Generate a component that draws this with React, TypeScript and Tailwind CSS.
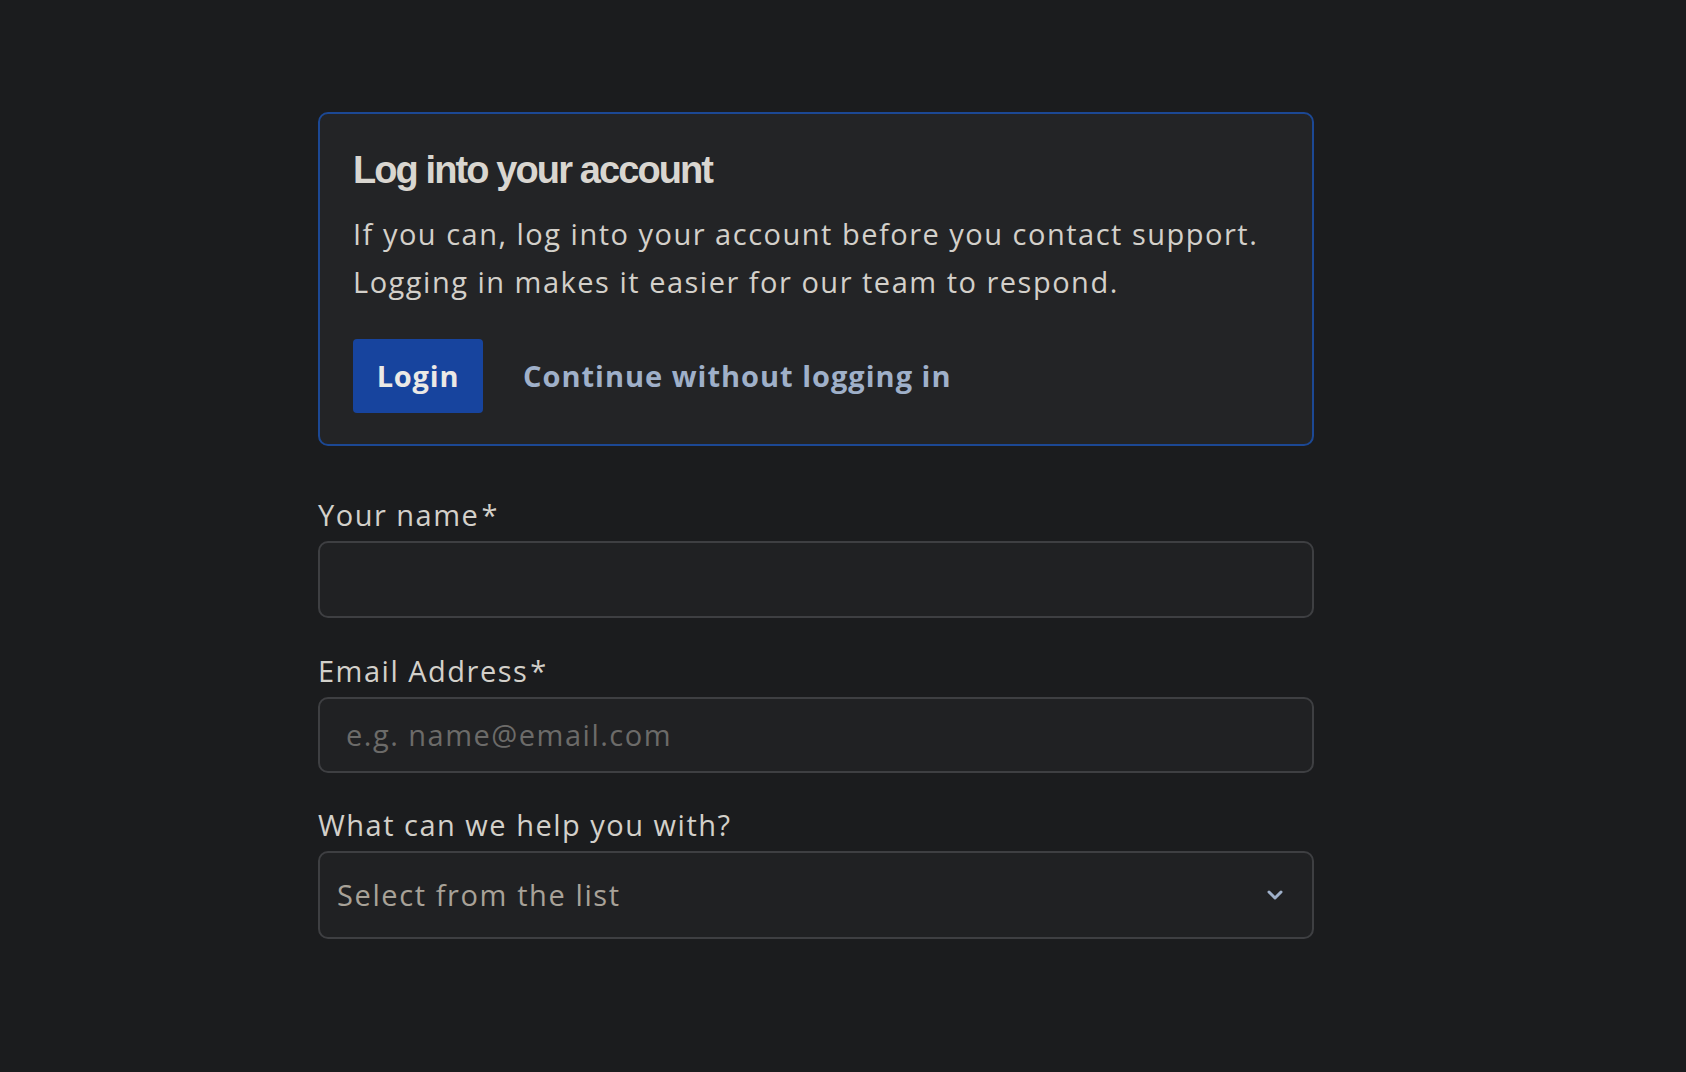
import React from "react";

export default function App() {
  return (
    <div
      className="min-h-screen w-full bg-[#1b1c1e] pt-[112px]"
      style={{ fontFamily: "'Open Sans', 'Noto Sans', sans-serif" }}
    >
      <div className="ml-[318px] w-[996px]">
        <div className="rounded-[10px] border-2 border-[#1c4894] bg-[#232426] px-[33px] pt-[33px] pb-[31px]">
          <h1
            className="text-[38px] font-bold leading-[46px] tracking-[-1.9px] text-[#d9d6d0]"
            style={{ fontFamily: "'Liberation Sans', Arial, sans-serif" }}
          >
            Log into your account
          </h1>
          <p className="mt-[17px] text-[29px] leading-[48px] tracking-[1.5px] text-[#d3d0ca]">
            If you can, log into your account before you contact support.
            <br />
            Logging in makes it easier for our team to respond.
          </p>
          <div className="mt-[33px] flex items-center gap-[40px]">
            <button className="flex h-[74px] w-[130px] items-center justify-center rounded-[4px] bg-[#17449e] text-[29px] font-bold tracking-[0.8px] text-[#ebe9e6]">
              Login
            </button>
            <button className="text-[29px] font-bold tracking-[1px] text-[#9fb0c9]">
              Continue without logging in
            </button>
          </div>
        </div>

        <div className="mt-[51px] flex flex-col">
          <label className="text-[29px] leading-[36px] tracking-[1.5px] text-[#d3d0ca]">
            Your name<span className="ml-[2px]">*</span>
          </label>
          <div className="mt-[8px] h-[77px] rounded-[10px] border-2 border-[#3e3f42] bg-[#202123]" />

          <label className="mt-[35px] text-[29px] leading-[36px] tracking-[1.5px] text-[#d3d0ca]">
            Email Address<span className="ml-[2px]">*</span>
          </label>
          <div className="mt-[8px] flex h-[76px] items-center rounded-[10px] border-2 border-[#3e3f42] bg-[#202123] px-[26px]">
            <span className="text-[29px] tracking-[1.5px] text-[#6c6b69]">
              e.g. name@email.com
            </span>
          </div>

          <label className="mt-[34px] text-[29px] leading-[36px] tracking-[1.5px] text-[#d3d0ca]">
            What can we help you with?
          </label>
          <div className="mt-[8px] flex h-[88px] items-center justify-between rounded-[10px] border-2 border-[#3e3f42] bg-[#202123] pl-[17px] pr-[28px]">
            <span className="text-[29px] tracking-[1.6px] text-[#a8a298]">
              Select from the list
            </span>
            <svg width="18" height="12" viewBox="0 0 18 12" fill="none">
              <path
                d="M3 3 L9 9 L15 3"
                stroke="#9fb0c9"
                strokeWidth="3"
                strokeLinecap="round"
                strokeLinejoin="round"
              />
            </svg>
          </div>
        </div>
      </div>
    </div>
  );
}
